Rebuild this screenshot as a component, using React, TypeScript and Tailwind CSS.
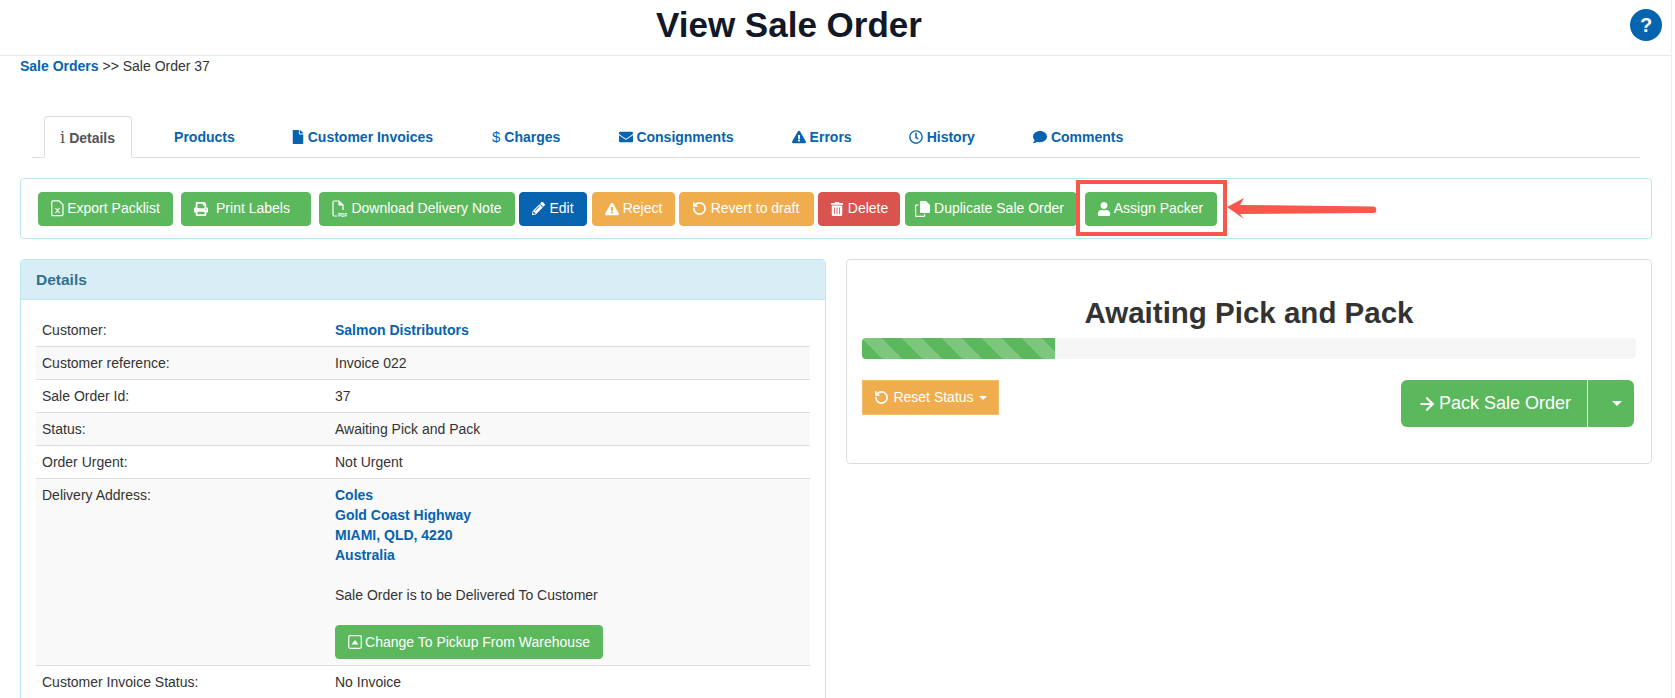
import React from "react";
import { FaPrint, FaEnvelope, FaExclamationTriangle, FaRegClock, FaComment, FaPencilAlt, FaTrashAlt, FaUser, FaFile } from "react-icons/fa";
import { RotateCcw, ArrowRight } from "lucide-react";

const Btn = ({ w, ml, color, children, className = "" }: { w: string; ml: string; color: string; children: React.ReactNode; className?: string }) => (
  <div className={`h-[34px] rounded-[4px] border flex items-center justify-center text-[14px] text-white whitespace-nowrap ${w} ${ml} ${color} ${className}`}>{children}</div>
);

const green = "bg-[#5cb85c] border-[#5cb85c]";
const orange = "bg-[#f0ad4e] border-[#f0ad4e]";
const red = "bg-[#d9534f] border-[#d9534f]";
const blue = "bg-[#0563af] border-[#0563af]";

const ExcelIcon = () => (
  <svg width="13" height="17" viewBox="0 0 13 17" fill="none" stroke="white" strokeWidth="1.2" className="mr-[3px]">
    <path d="M2 .8h6l4 4v9.6a1.2 1.2 0 0 1-1.2 1.2H2A1.2 1.2 0 0 1 .8 14.4V2A1.2 1.2 0 0 1 2 .8z" />
    <path d="M4.5 8l4 5M8.5 8l-4 5" />
  </svg>
);
const PdfIcon = () => (
  <svg width="17" height="18" viewBox="0 0 17 18" fill="none" stroke="white" strokeWidth="1.2" className="mr-[2px]">
    <path d="M5 16H2.2A1.2 1.2 0 0 1 1 14.8V2.2A1.2 1.2 0 0 1 2.2 1H7l4 4v5" />
    <path d="M7 1v4h4" fill="white" />
    <text x="6" y="16.5" fontSize="4.6" fontWeight="700" fill="white" stroke="none" fontFamily="Liberation Sans, sans-serif">PDF</text>
  </svg>
);
const CopyIcon = () => (
  <svg width="15" height="16" viewBox="0 0 15 16" fill="white" className="mr-[4px]">
    <path d="M6 0h5l4 4v7a1 1 0 0 1-1 1H6a1 1 0 0 1-1-1V1a1 1 0 0 1 1-1z" />
    <path d="M3.5 4H1.6A1 1 0 0 0 .6 5v9.4a1 1 0 0 0 1 1h7a1 1 0 0 0 1-1V13" fill="none" stroke="white" strokeWidth="1.2" />
  </svg>
);
const PickupIcon = () => (
  <svg width="14" height="14" viewBox="0 0 14 14" fill="none" stroke="white" strokeWidth="1.2" className="mr-[3px]">
    <rect x=".7" y=".7" width="12.6" height="12.6" rx="1.5" />
    <path d="M3.5 9.5L7 5l3.5 4.5z" fill="white" stroke="none" />
  </svg>
);
const Caret = ({ className = "" }: { className?: string }) => (
  <span className={`inline-block w-0 h-0 border-x-[4px] border-x-transparent border-t-[4px] border-t-white ${className}`} />
);

const Tab = ({ icon, label, mr = "mr-[26px]" }: { icon?: React.ReactNode; label: string; mr?: string }) => (
  <div className={`h-[42px] px-[16px] pt-[2px] flex items-center text-[14px] font-bold whitespace-nowrap text-[#0563af] ${mr}`}>
    {icon}
    {label}
  </div>
);

const Row = ({ label, children, shade = false, first = false }: { label: string; children: React.ReactNode; shade?: boolean; first?: boolean }) => (
  <div className={`flex border-t ${first ? "border-transparent" : "border-[#dddddd]"} ${shade ? "bg-[#f9f9f9]" : ""}`}>
    <div className="w-[299px] shrink-0 px-[6px] py-[6px] leading-[20px]">{label}</div>
    <div className="flex-1 py-[6px] leading-[20px]">{children}</div>
  </div>
);

const Link = ({ children }: { children: React.ReactNode }) => <div className="font-bold text-[#0563af]">{children}</div>;

export default function App() {
  return (
    <div className="w-[1672px] h-[698px] overflow-hidden bg-white border-r border-[#eeeeee] text-[#333333] text-[14px] font-['Liberation_Sans',Arial,sans-serif]">
      <header className="h-[56px] border-b border-[#e8e8ee] flex items-start">
        <h1 className="ml-[656px] text-[35px] leading-[50px] font-bold text-[#111827] whitespace-nowrap">View Sale Order</h1>
        <div className="ml-auto mr-[9px] mt-[9px] w-[32px] h-[32px] rounded-full bg-[#0563af] flex items-center justify-center text-white text-[20px] font-bold">?</div>
      </header>

      <main className="pl-[20px] pr-[19px]">
        <div className="h-[20px] leading-[20px]">
          <span className="font-bold text-[#0563af]">Sale Orders</span> &gt;&gt; Sale Order 37
        </div>

        <nav className="mt-[40px] mx-[12px] pl-[12px] flex border-b border-[#dddddd] h-[42px] items-end">
          <div className="h-[42px] pl-[15px] pr-[16px] pt-[2px] mr-[26px] -mb-px flex items-center text-[14px] font-bold whitespace-nowrap text-[#555555] bg-white border border-[#dddddd] border-b-white rounded-t-[4px]">
            <span className="mr-[4px] text-[16px] font-normal font-['DejaVu_Serif',serif]">i</span>Details
          </div>
          <Tab label="Products" mr="mr-[24px]" />
          <Tab label="Customer Invoices" mr="mr-[27px]" icon={<FaFile className="mr-[3px] text-[14px]" />} />
          <Tab label="Charges" mr="mr-[27px]" icon={<span className="mr-[4px] font-normal text-[15px]">$</span>} />
          <Tab label="Consignments" icon={<FaEnvelope className="mr-[3px] text-[14px]" />} />
          <Tab label="Errors" mr="mr-[25px]" icon={<FaExclamationTriangle className="mr-[4px] text-[14px]" />} />
          <Tab label="History" icon={<FaRegClock className="mr-[4px] text-[14px]" />} />
          <Tab label="Comments" icon={<FaComment className="mr-[4px] text-[14px]" />} />
        </nav>

        <section className="relative mt-[20px] h-[61px] border border-[#bce8f1] rounded-[4px] flex items-center pl-[17px]">
          <Btn w="w-[135px]" ml="" color={green}><ExcelIcon />Export Packlist</Btn>
          <Btn w="w-[130px]" ml="ml-[8px]" color={green} className="pr-[8px]"><FaPrint className="mr-[8px] text-[14px]" />Print Labels</Btn>
          <Btn w="w-[196px]" ml="ml-[8px]" color={green}><PdfIcon />Download Delivery Note</Btn>
          <Btn w="w-[68px]" ml="ml-[4px]" color={blue}><FaPencilAlt className="mr-[4px] text-[13px]" />Edit</Btn>
          <Btn w="w-[83px]" ml="ml-[5px]" color={orange}><FaExclamationTriangle className="mr-[4px] text-[14px]" />Reject</Btn>
          <Btn w="w-[135px]" ml="ml-[4px]" color={orange} className="pr-[2px]"><RotateCcw size={15} strokeWidth={2.6} className="mr-[4px]" />Revert to draft</Btn>
          <Btn w="w-[82px]" ml="ml-[4px]" color={red}><FaTrashAlt className="mr-[4px] text-[14px]" />Delete</Btn>
          <Btn w="w-[172px]" ml="ml-[5px]" color={green} className="pr-[3px]"><CopyIcon />Duplicate Sale Order</Btn>
          <Btn w="w-[132px]" ml="ml-[8px]" color={green} className="pr-[2px]"><FaUser className="mr-[3px] text-[14px]" />Assign Packer</Btn>

          <div className="absolute left-[1055px] top-[1px] w-[151px] h-[56px] border-[4px] border-[#f9574c]" />
          <svg className="absolute left-[1202px] top-[16px]" width="155" height="26" viewBox="0 0 155 26" fill="#f9574c">
            <path d="M4 12L21 3l-4 7 133 1.5a3.2 3.2 0 0 1 0 6.6L17 19l4 5z" />
          </svg>
        </section>

        <div className="flex items-start mt-[20px]">
          <section className="w-[806px] h-[500px] shrink-0 border border-[#bce8f1] rounded-[4px]">
            <div className="h-[40px] px-[15px] bg-[#d9edf7] text-[#31708f] text-[15.5px] font-bold flex items-center rounded-t-[3px] border-b border-[#bce8f1]">Details</div>
            <div className="px-[15px] pt-[13px]">
              <Row first label="Customer:"><Link>Salmon Distributors</Link></Row>
              <Row shade label="Customer reference:">Invoice 022</Row>
              <Row label="Sale Order Id:">37</Row>
              <Row shade label="Status:">Awaiting Pick and Pack</Row>
              <Row label="Order Urgent:">Not Urgent</Row>
              <Row shade label="Delivery Address:">
                <Link>Coles</Link>
                <Link>Gold Coast Highway</Link>
                <Link>MIAMI, QLD, 4220</Link>
                <Link>Australia</Link>
                <div className="mt-[20px]">Sale Order is to be Delivered To Customer</div>
                <Btn w="w-[268px]" ml="" color={green} className="mt-[20px]"><PickupIcon />Change To Pickup From Warehouse</Btn>
              </Row>
              <Row label="Customer Invoice Status:">No Invoice</Row>
            </div>
          </section>

          <section className="ml-[20px] flex-1 h-[205px] border border-[#dddddd] rounded-[4px] px-[15px] pt-[36px]">
            <h2 className="text-[29.5px] leading-[33px] font-bold text-center text-[#333333]">Awaiting Pick and Pack</h2>
            <div className="mt-[9px] h-[21px] w-full rounded-[4px] bg-[#f5f5f5] overflow-hidden">
              <div className="h-full w-[193px] bg-[#5cb85c] bg-[linear-gradient(45deg,rgba(255,255,255,.2)_25%,transparent_25%,transparent_50%,rgba(255,255,255,.2)_50%,rgba(255,255,255,.2)_75%,transparent_75%,transparent)] bg-[length:40px_40px]" />
            </div>
            <div className="mt-[21px] flex items-start">
              <div className="w-[137px] h-[35px] bg-[#f0ad4e] border border-[#f5bc6c] text-white flex items-center justify-center">
                <RotateCcw size={15} strokeWidth={2.6} className="mr-[4px]" />Reset Status<Caret className="ml-[5px]" />
              </div>
              <div className="ml-auto mr-[2px] flex h-[47px] text-white">
                <div className="w-[186px] bg-[#5cb85c] rounded-l-[6px] flex items-center justify-center text-[18px]">
                  <ArrowRight size={20} strokeWidth={2.6} className="mr-[2px]" />Pack Sale Order
                </div>
                <div className="w-[47px] bg-[#5cb85c] rounded-r-[6px] border-l border-white flex items-center justify-center pl-[11px]">
                  <span className="inline-block w-0 h-0 border-x-[5px] border-x-transparent border-t-[5px] border-t-white" />
                </div>
              </div>
            </div>
          </section>
        </div>
      </main>
    </div>
  );
}
